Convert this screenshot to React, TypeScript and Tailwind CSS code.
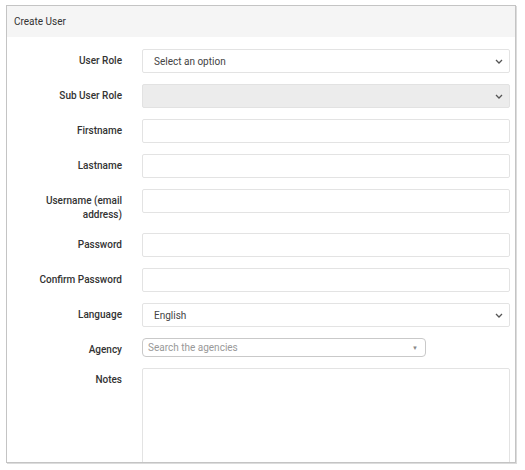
import React from "react";

function Chevron() {
  return (
    <svg width="8" height="5" viewBox="0 0 8 5" className="shrink-0">
      <polyline points="1,1 4,4 7,1" fill="none" stroke="#555" strokeWidth="1.3" />
    </svg>
  );
}

function Row({ label, children }: { label: React.ReactNode; children: React.ReactNode }) {
  return (
    <div className="grid grid-cols-[115px_1fr] gap-x-[20px]">
      <div className="pt-[5px] text-right text-[10px] leading-[14px] font-medium text-[#333]">{label}</div>
      <div>{children}</div>
    </div>
  );
}

function SelectBox({ value, disabled }: { value?: string; disabled?: boolean }) {
  return (
    <div
      className={`flex h-[24px] items-center justify-between rounded-[2px] border pl-[11px] pr-[6px] text-[10px] text-[#444] ${
        disabled ? "border-[#e2e2e2] bg-[#ececec]" : "border-[#e3e3e3] bg-white"
      }`}
    >
      <span>{value}</span>
      <Chevron />
    </div>
  );
}

function TextInput() {
  return <div className="h-[24px] rounded-[2px] border border-[#e3e3e3] bg-white" />;
}

export default function App() {
  return (
    <div className="min-h-screen bg-white pl-[6px] pt-[5px]" style={{ fontFamily: "Roboto, 'Liberation Sans', sans-serif" }}>
      <div className="h-[458px] w-[510px] overflow-hidden border border-[#c4c4c4] bg-white shadow-[1px_1px_0_#dcdcdc]">
        {/* Header */}
        <div className="flex h-[31px] items-center bg-[#f5f5f5] pl-[7px] text-[10px] text-[#333]">Create User</div>

        {/* Form */}
        <div className="flex flex-col gap-[11px] pr-[5px] pt-[12px]">
          <Row label="User Role">
            <SelectBox value="Select an option" />
          </Row>
          <Row label="Sub User Role">
            <SelectBox disabled />
          </Row>
          <Row label="Firstname">
            <TextInput />
          </Row>
          <Row label="Lastname">
            <TextInput />
          </Row>
          <Row
            label={
              <>
                Username (email
                <br />
                address)
              </>
            }
          >
            <TextInput />
          </Row>
          <Row label="Password">
            <TextInput />
          </Row>
          <Row label="Confirm Password">
            <TextInput />
          </Row>
          <Row label="Language">
            <SelectBox value="English" />
          </Row>
          <Row label="Agency">
            <div className="flex h-[19px] w-[284px] items-center justify-between rounded-[4px] border border-[#c9c9c9] bg-white pl-[5px] pr-[7px] text-[10px] text-[#999]">
              <span>Search the agencies</span>
              <span className="text-[6px] text-[#888]">▼</span>
            </div>
          </Row>
          <Row label="Notes">
            <div className="h-[120px] rounded-[2px] border border-[#e3e3e3] bg-white" />
          </Row>
        </div>
      </div>
    </div>
  );
}
